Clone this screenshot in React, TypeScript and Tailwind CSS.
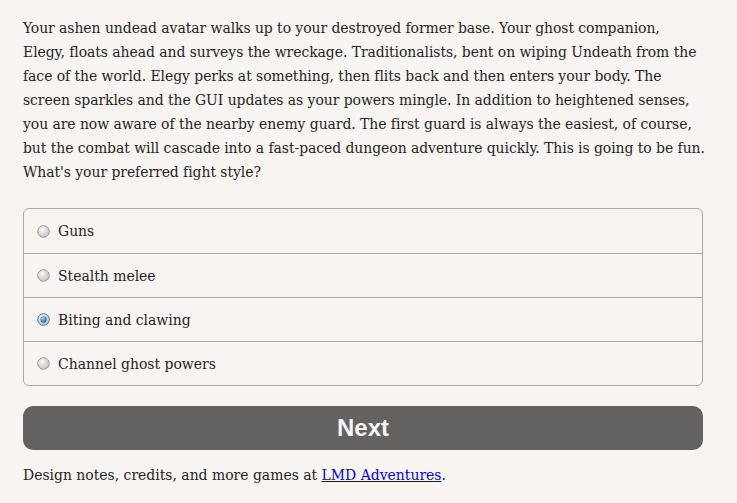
import React, { useState } from "react";

const LINES = [
  "Your ashen undead avatar walks up to your destroyed former base. Your ghost companion,",
  "Elegy, floats ahead and surveys the wreckage. Traditionalists, bent on wiping Undeath from the",
  "face of the world. Elegy perks at something, then flits back and then enters your body. The",
  "screen sparkles and the GUI updates as your powers mingle. In addition to heightened senses,",
  "you are now aware of the nearby enemy guard. The first guard is always the easiest, of course,",
  "but the combat will cascade into a fast-paced dungeon adventure quickly. This is going to be fun.",
  "What's your preferred fight style?",
];

const OPTIONS = ["Guns", "Stealth melee", "Biting and clawing", "Channel ghost powers"];

function Radio({ checked }: { checked: boolean }) {
  return (
    <svg width="13" height="13" viewBox="0 0 13 13" className="shrink-0">
      <defs>
        <radialGradient id="off" cx="40%" cy="35%" r="70%">
          <stop offset="0%" stopColor="#fafafa" />
          <stop offset="100%" stopColor="#bdbdbd" />
        </radialGradient>
        <radialGradient id="dot" cx="40%" cy="35%" r="70%">
          <stop offset="0%" stopColor="#8fd8ff" />
          <stop offset="100%" stopColor="#0a5fa8" />
        </radialGradient>
      </defs>
      <circle cx="6.5" cy="6.5" r="5.8" fill="url(#off)" stroke={checked ? "#3c7fb1" : "#9c9c9c"} strokeWidth="1" />
      {checked && <circle cx="6.5" cy="6.5" r="3.2" fill="url(#dot)" />}
    </svg>
  );
}

export default function App() {
  const [choice, setChoice] = useState(2);
  return (
    <div className="min-h-screen bg-[#f7f4f1] px-[23px] pt-[16px] text-[#262523] font-['DejaVu_Serif_Condensed','DejaVu_Serif',serif] text-[15.5px] leading-[24px]">
      <p className="whitespace-nowrap tracking-[-0.05px]">
        {LINES.map((l, i) => (
          <React.Fragment key={i}>
            {l}
            {i < LINES.length - 1 && <br />}
          </React.Fragment>
        ))}
      </p>

      <div className="mt-[24px] w-[680px] rounded-[6px] border border-[#aaaaaa]">
        {OPTIONS.map((o, i) => (
          <div
            key={o}
            onClick={() => setChoice(i)}
            className={`flex h-[44px] items-center gap-[8px] pl-[13px] ${i > 0 ? "border-t border-[#aaaaaa]" : ""}`}
          >
            <Radio checked={choice === i} />
            <span>{o}</span>
          </div>
        ))}
      </div>

      <button className="mt-[20px] flex h-[44px] w-[680px] items-center justify-center rounded-[10px] bg-[#636260] font-['Liberation_Sans',sans-serif] text-[24px] font-bold text-[#f5f5f5]">
        Next
      </button>

      <p className="mt-[13px]">
        Design notes, credits, and more games at{" "}
        <a href="#" className="text-[#0000ee] underline">LMD Adventures</a>.
      </p>
    </div>
  );
}
